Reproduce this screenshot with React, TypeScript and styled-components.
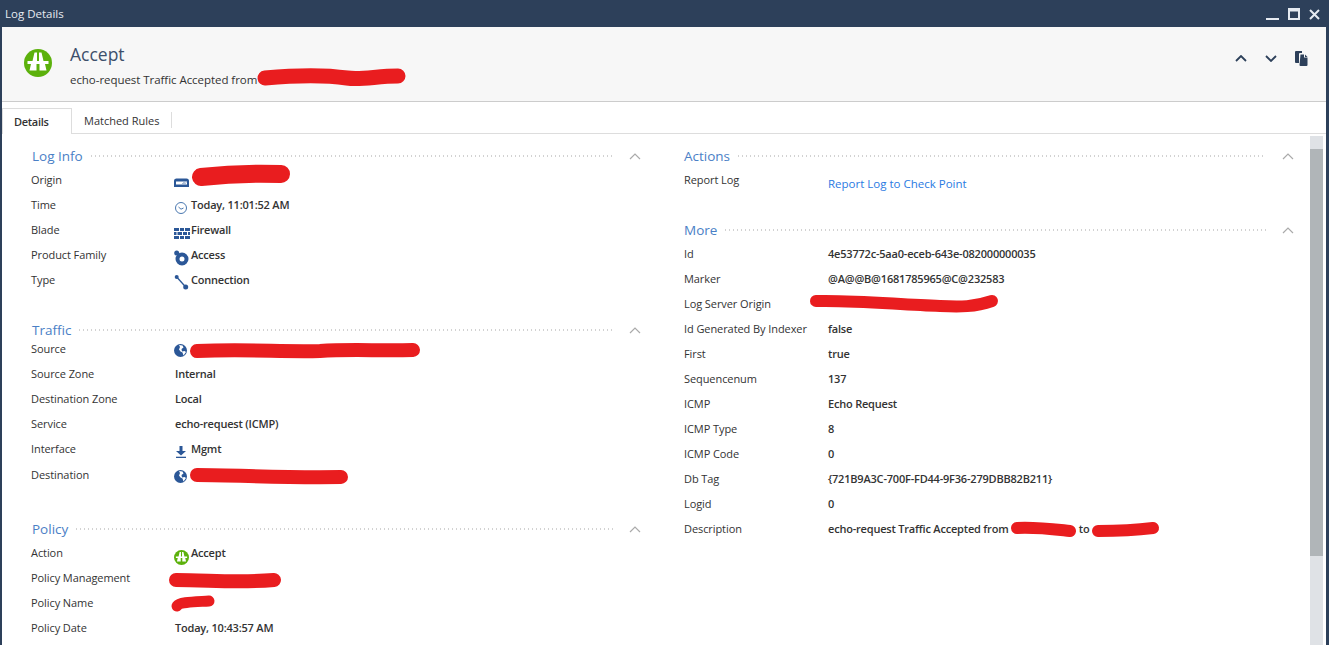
import React from "react";
import styled, { createGlobalStyle } from "styled-components";

const GlobalStyle = createGlobalStyle`
  html, body {
    margin: 0;
    height: 100%;
    overflow: hidden;
    background: #fff;
  }
  body {
    font-family: "Open Sans", "Noto Sans", "Liberation Sans", sans-serif;
    font-size: 11px;
    color: #333;
  }
`;

const Window = styled.div`
  display: flex;
  flex-direction: column;
  height: 645px;
  background: #2d405a;
  padding: 0 3px 0 2px;
  box-sizing: border-box;
`;

const TitleBar = styled.div`
  flex: 0 0 27px;
  display: flex;
  align-items: center;
  justify-content: space-between;
  color: #e6ebf1;
  font-size: 11.5px;
  padding: 0 5px 0 3px;
`;

const WindowButtons = styled.div`
  display: flex;
  align-items: center;
  gap: 9px;
  margin-top: 1px;
  margin-right: 1px;
  svg {
    display: block;
  }
`;

const Header = styled.div`
  flex: 0 0 74px;
  display: flex;
  align-items: flex-start;
  background: #f7f7f7;
  border-bottom: 1px solid #ccc;
  padding: 0 18px 0 22px;
`;

const HeaderIcon = styled.div`
  margin-top: 22px;
  width: 28px;
  height: 28px;
  svg {
    display: block;
  }
`;

const HeaderText = styled.div`
  margin-left: 18px;
  flex: 1;
  position: relative;
`;

const Title = styled.div`
  margin-top: 14px;
  font-size: 17.5px;
  line-height: 26px;
  color: #3d4f6b;
  font-weight: 500;
`;

const Subtitle = styled.div`
  position: relative;
  margin-top: 5px;
  font-size: 11.5px;
  line-height: 16px;
  letter-spacing: -0.05px;
  color: #333;
`;

const HeaderActions = styled.div`
  display: flex;
  align-items: center;
  gap: 18px;
  margin-top: 24px;
  svg {
    display: block;
  }
`;

const TabStrip = styled.div`
  flex: 0 0 32px;
  display: flex;
  align-items: flex-end;
  background: #fff;
  border-bottom: 1px solid #ddd;
  box-sizing: border-box;
`;

const Tab = styled.div<{ $active?: boolean }>`
  height: 26px;
  box-sizing: border-box;
  display: flex;
  align-items: center;
  font-size: 11px;
  ${(p) =>
    p.$active
      ? `
    width: 70px;
    padding-left: 11px;
    font-weight: 600;
    letter-spacing: -0.3px;
    background: #fff;
    border: 1px solid #ddd;
    border-bottom: none;
    margin-bottom: -1px;
  `
      : `
    padding-left: 12px;
    color: #333;
  `}
`;

const TabDivider = styled.div`
  width: 1px;
  height: 16px;
  background: #ddd;
  margin: 0 0 5px 12px;
`;

const Body = styled.div`
  flex: 1;
  min-height: 0;
  display: flex;
  background: #fff;
  overflow: hidden;
`;

const Columns = styled.div`
  display: flex;
  gap: 43px;
  padding: 12px 0 0 29px;
`;

const Column = styled.div`
  width: 610px;
`;

const Section = styled.section<{ $top?: number }>`
  margin-top: ${(p) => p.$top ?? 0}px;
`;

const SectionHead = styled.div<{ $gap?: number; $flush?: boolean }>`
  display: flex;
  align-items: center;
  height: 20px;
  margin-bottom: ${(p) => p.$gap ?? 2}px;
  padding-left: ${(p) => (p.$flush ? 0 : 1)}px;
  svg {
    display: block;
    margin-left: 16px;
  }
`;

const SectionTitle = styled.div`
  font-size: 13.5px;
  line-height: 20px;
  color: #4a80c6;
`;

const Dots = styled.div`
  flex: 1;
  height: 2px;
  margin-left: 8px;
  background-image: linear-gradient(to right, #d2d2d2 1px, transparent 1px);
  background-size: 4px 2px;
`;

const Row = styled.div<{ $pad?: number }>`
  display: grid;
  grid-template-columns: 144px 1fr;
  height: 25px;
  padding-top: ${(p) => p.$pad ?? 0}px;
  align-items: start;
  line-height: 24px;
`;

const Label = styled.div`
  color: #333;
  letter-spacing: -0.08px;
  white-space: nowrap;
`;

const Value = styled.div`
  position: relative;
  display: flex;
  align-items: center;
  height: 24px;
  font-weight: 600;
  letter-spacing: -0.2px;
  color: #333;
  white-space: nowrap;
`;

const LinkValue = styled.a`
  color: #2a7ae2;
  font-size: 11.5px;
  font-weight: 400;
  letter-spacing: 0;
  margin-top: 8px;
  text-decoration: none;
`;

const IconSlot = styled.span<{ $shift?: number }>`
  flex: 0 0 16px;
  width: 16px;
  height: 16px;
  margin: 0 1px 0 -1px;
  transform: translateY(${(p) => p.$shift ?? 3}px);
  svg {
    display: block;
  }
`;

const Scrollbar = styled.div`
  flex: 0 0 13px;
  margin: 2px 3px 0 auto;
  background: #dfe2e6;
  padding-top: 13px;
  box-sizing: border-box;
`;

const ScrollThumb = styled.div`
  height: 407px;
  background: #b0b5b8;
`;

// red marker strokes that hide addresses in the screenshot
const Scribble = styled.svg<{ $x: number; $y: number }>`
  position: absolute;
  left: ${(p) => p.$x}px;
  top: ${(p) => p.$y}px;
  overflow: visible;
`;

const InlineScribble = styled.svg`
  display: inline-block;
  flex: none;
  overflow: visible;
`;

function Redact(props: { x: number; y: number; w: number; h: number; d: string; sw: number }) {
  return (
    <Scribble $x={props.x} $y={props.y} width={props.w} height={props.h}>
      <path d={props.d} fill="none" stroke="#e91d1f" strokeWidth={props.sw} strokeLinecap="round" strokeLinejoin="round" />
    </Scribble>
  );
}

const AcceptIcon = ({ size }: { size: number }) => (
  <svg width={size} height={size} viewBox="0 0 28 28">
    <circle cx="14" cy="14" r="14" fill="#5cb10c" />
    <path
      d="M10.5 3.5H13V12H8.5zM15 3.5h2.5l2 8.5H15zM3.5 12h21v3h-21zM7 15h5.5v6.5h-7zM15.5 15H21l1.5 6.5h-7z"
      fill="#fff"
    />
  </svg>
);

const GatewayIcon = () => (
  <svg width="16" height="16" viewBox="0 0 16 16">
    <path d="M3 3.5h9.5A2.5 2.5 0 0 1 15 6v6H0V6a2.5 2.5 0 0 1 3-2.5z" fill="#2b5797" />
    <rect x="2" y="6.5" width="11" height="3" fill="#fff" />
    <path d="M8.5 9L10 7.5l1 1 1-1" stroke="#2b5797" strokeWidth="0.8" fill="none" />
  </svg>
);

const ClockIcon = () => (
  <svg width="16" height="16" viewBox="0 0 16 16">
    <circle cx="7" cy="8" r="5.5" fill="none" stroke="#4a78b0" strokeWidth="1" />
    <path d="M4.5 7L7 9.2 9.5 8" fill="none" stroke="#4a78b0" strokeWidth="1" />
  </svg>
);

const FirewallIcon = () => (
  <svg width="16" height="16" viewBox="0 0 16 16" fill="#2b5797">
    <rect x="0" y="3" width="5" height="3" />
    <rect x="6" y="3" width="4" height="3" />
    <rect x="11" y="3" width="5" height="3" />
    <rect x="0" y="7" width="2.5" height="3" />
    <rect x="3.5" y="7" width="4.5" height="3" />
    <rect x="9" y="7" width="4" height="3" />
    <rect x="14" y="7" width="2" height="3" />
    <rect x="0" y="11" width="5" height="3" />
    <rect x="6" y="11" width="4" height="3" />
    <rect x="11" y="11" width="5" height="3" />
  </svg>
);

const AccessIcon = () => (
  <svg width="16" height="16" viewBox="0 0 16 16">
    <circle cx="8" cy="9" r="4.5" fill="none" stroke="#2b5797" strokeWidth="4" />
    <circle cx="2.7" cy="3" r="2.5" fill="#2b5797" />
  </svg>
);

const ConnectionIcon = () => (
  <svg width="16" height="16" viewBox="0 0 16 16">
    <path d="M2.7 2l9 10" stroke="#2b5797" strokeWidth="1.3" />
    <circle cx="2.7" cy="2" r="2" fill="#2b5797" />
    <circle cx="11.7" cy="12" r="2.5" fill="#2b5797" />
  </svg>
);

const GlobeIcon = () => (
  <svg width="16" height="16" viewBox="0 0 16 16">
    <circle cx="6.5" cy="8.5" r="6.5" fill="#2b5797" />
    <path d="M5 3l3.5.5 1 2-2 1.5.5 2.5 2.5-.5 1.5 1-2.5 3.5-1-3-2-1-1.5-2 1-2.5z" fill="#fff" />
  </svg>
);

const DownloadIcon = () => (
  <svg width="16" height="16" viewBox="0 0 16 16" fill="#2b5797">
    <path d="M5.5 2h3v5H12L7 11.5 2 7h3.5z" />
    <rect x="2" y="12.7" width="10" height="1.3" />
  </svg>
);

const ChevronUp = ({ color, size, width }: { color: string; size: number; width: number }) => (
  <svg width={size} height={Math.round(size * 0.6)} viewBox="0 0 12 7">
    <path d="M1 6l5-5 5 5" fill="none" stroke={color} strokeWidth={width} />
  </svg>
);

const ChevronDown = ({ color, size, width }: { color: string; size: number; width: number }) => (
  <svg width={size} height={Math.round(size * 0.6)} viewBox="0 0 12 7">
    <path d="M1 1l5 5 5-5" fill="none" stroke={color} strokeWidth={width} />
  </svg>
);

const CopyIcon = () => (
  <svg width="13" height="15" viewBox="0 0 13 15" fill="#2d405a">
    <path d="M1 0h6v2H5a1 1 0 0 0-1 1v9H1a1 1 0 0 1-1-1V1a1 1 0 0 1 1-1z" />
    <path d="M5.5 3.5H9v3h3.5V14a1 1 0 0 1-1 1h-6a1 1 0 0 1-1-1z" />
    <path d="M10 3.5L12.5 6H10z" />
  </svg>
);

function Head({ title, gap, flush }: { title: string; gap?: number; flush?: boolean }) {
  return (
    <SectionHead $gap={gap} $flush={flush}>
      <SectionTitle>{title}</SectionTitle>
      <Dots />
      <ChevronUp color="#aaa" size={12} width={1.2} />
    </SectionHead>
  );
}

const moreRows: [string, string][] = [
  ["First", "true"],
  ["Sequencenum", "137"],
  ["ICMP", "Echo Request"],
  ["ICMP Type", "8"],
  ["ICMP Code", "0"],
  ["Db Tag", "{721B9A3C-700F-FD44-9F36-279DBB82B211}"],
  ["Logid", "0"],
];

export default function App() {
  return (
    <Window>
      <GlobalStyle />
      <TitleBar>
        <span>Log Details</span>
        <WindowButtons>
          <svg width="13" height="12" viewBox="0 0 13 12">
            <rect x="0" y="10" width="13" height="2" fill="#e6ebf1" />
          </svg>
          <svg width="12" height="12" viewBox="0 0 12 12">
            <path d="M0 0h12v12H0zM2 3.5V10h8V3.5z" fill="#e6ebf1" fillRule="evenodd" />
          </svg>
          <svg width="11" height="11" viewBox="0 0 11 11">
            <path d="M1 1l9 9M10 1l-9 9" stroke="#e6ebf1" strokeWidth="2" />
          </svg>
        </WindowButtons>
      </TitleBar>

      <Header>
        <HeaderIcon>
          <AcceptIcon size={28} />
        </HeaderIcon>
        <HeaderText>
          <Title>Accept</Title>
          <Subtitle>
            echo-request Traffic Accepted from
            <Redact x={187} y={-4} w={148} h={19} sw={15} d="M8 10C40 7 70 7 90 10C105 12 120 8 141 8" />
          </Subtitle>
        </HeaderText>
        <HeaderActions>
          <ChevronUp color="#2d405a" size={12} width={1.8} />
          <ChevronDown color="#2d405a" size={12} width={1.8} />
          <CopyIcon />
        </HeaderActions>
      </Header>

      <TabStrip>
        <Tab $active>Details</Tab>
        <Tab>Matched Rules</Tab>
        <TabDivider />
      </TabStrip>

      <Body>
        <Columns>
          <Column>
            <Section>
              <Head title="Log Info" />
              <Row>
                <Label>Origin</Label>
                <Value>
                  <IconSlot><GatewayIcon /></IconSlot>
                  <Redact x={17} y={-3} w={98} h={21} sw={18} d="M9 12C35 9 60 8 89 9" />
                </Value>
              </Row>
              <Row>
                <Label>Time</Label>
                <Value>
                  <IconSlot><ClockIcon /></IconSlot>
                  Today, 11:01:52 AM
                </Value>
              </Row>
              <Row>
                <Label>Blade</Label>
                <Value>
                  <IconSlot><FirewallIcon /></IconSlot>
                  Firewall
                </Value>
              </Row>
              <Row>
                <Label>Product Family</Label>
                <Value>
                  <IconSlot><AccessIcon /></IconSlot>
                  Access
                </Value>
              </Row>
              <Row>
                <Label>Type</Label>
                <Value>
                  <IconSlot><ConnectionIcon /></IconSlot>
                  Connection
                </Value>
              </Row>
            </Section>

            <Section $top={27}>
              <Head title="Traffic" gap={-3} />
              <Row>
                <Label>Source</Label>
                <Value>
                  <IconSlot $shift={1}><GlobeIcon /></IconSlot>
                  <Redact x={15} y={5} w={230} h={16} sw={14} d="M7 9C60 7 90 10 130 9C160 7 190 9 223 8" />
                </Value>
              </Row>
              <Row>
                <Label>Source Zone</Label>
                <Value>Internal</Value>
              </Row>
              <Row>
                <Label>Destination Zone</Label>
                <Value>Local</Value>
              </Row>
              <Row>
                <Label>Service</Label>
                <Value>echo-request (ICMP)</Value>
              </Row>
              <Row>
                <Label>Interface</Label>
                <Value>
                  <IconSlot><DownloadIcon /></IconSlot>
                  Mgmt
                </Value>
              </Row>
              <Row $pad={1}>
                <Label>Destination</Label>
                <Value>
                  <IconSlot $shift={1}><GlobeIcon /></IconSlot>
                  <Redact x={15} y={5} w={158} h={16} sw={14} d="M7 7C50 7 90 10 151 9" />
                </Value>
              </Row>
            </Section>

            <Section $top={31}>
              <Head title="Policy" />
              <Row>
                <Label>Action</Label>
                <Value>
                  <IconSlot $shift={5}><AcceptIcon size={15} /></IconSlot>
                  Accept
                </Value>
              </Row>
              <Row>
                <Label>Policy Management</Label>
                <Value>
                  <Redact x={-6} y={7} w={112} h={15} sw={14} d="M7 7C40 7 70 10 105 7" />
                </Value>
              </Row>
              <Row>
                <Label>Policy Name</Label>
                <Value>
                  <Redact x={-3} y={4} w={42} h={16} sw={11} d="M5 11C8 7 20 7 37 6" />
                </Value>
              </Row>
              <Row>
                <Label>Policy Date</Label>
                <Value>Today, 10:43:57 AM</Value>
              </Row>
            </Section>
          </Column>

          <Column>
            <Section>
              <Head title="Actions" flush />
              <Row>
                <Label>Report Log</Label>
                <Value>
                  <LinkValue>Report Log to Check Point</LinkValue>
                </Value>
              </Row>
            </Section>

            <Section $top={27}>
              <Head title="More" flush />
              <Row>
                <Label>Id</Label>
                <Value>4e53772c-5aa0-eceb-643e-082000000035</Value>
              </Row>
              <Row>
                <Label>Marker</Label>
                <Value>@A@@B@1681785965@C@232583</Value>
              </Row>
              <Row>
                <Label>Log Server Origin</Label>
                <Value>
                  <Redact x={-18} y={3} w={188} h={17} sw={12} d="M6 6C50 5 90 10 130 11C150 12 165 12 182 6" />
                </Value>
              </Row>
              <Row>
                <Label>Id Generated By Indexer</Label>
                <Value>false</Value>
              </Row>
              {moreRows.map(([label, value]) => (
                <Row key={label}>
                  <Label>{label}</Label>
                  <Value>{value}</Value>
                </Row>
              ))}
              <Row>
                <Label>Description</Label>
                <Value>
                  echo-request Traffic Accepted from&nbsp;
                  <InlineScribble width="65" height="15">
                    <path d="M6 6C25 5 40 7 59 9" fill="none" stroke="#e91d1f" strokeWidth="12" strokeLinecap="round" />
                  </InlineScribble>
                  &nbsp;to&nbsp;
                  <InlineScribble width="67" height="15">
                    <path d="M6 9C25 9 45 8 61 6" fill="none" stroke="#e91d1f" strokeWidth="12" strokeLinecap="round" />
                  </InlineScribble>
                </Value>
              </Row>
            </Section>
          </Column>
        </Columns>
        <Scrollbar>
          <ScrollThumb />
        </Scrollbar>
      </Body>
    </Window>
  );
}
